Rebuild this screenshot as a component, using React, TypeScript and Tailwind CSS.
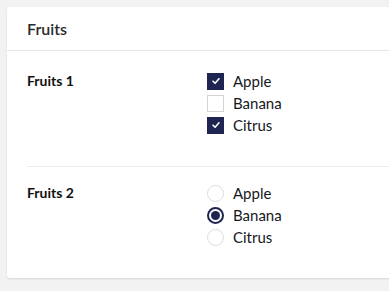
import React from 'react';

const fruits = ['Apple', 'Banana', 'Citrus'];

const CheckBox: React.FC<{ checked: boolean }> = ({ checked }) => (
  <span
    className={`flex h-[17px] w-[17px] items-center justify-center border ${
      checked ? 'border-[#1e2550] bg-[#1e2550]' : 'border-[#d4d4d4] bg-white'
    }`}
  >
    {checked && (
      <svg width="10" height="10" viewBox="0 0 10 10" fill="none">
        <path d="M2 5.2 L4.1 7.3 L8 2.8" stroke="white" strokeWidth="1.6" strokeLinecap="round" strokeLinejoin="round" />
      </svg>
    )}
  </span>
);

const Radio: React.FC<{ checked: boolean }> = ({ checked }) => (
  <span
    className={`flex h-[17px] w-[17px] items-center justify-center rounded-full border ${
      checked ? 'border-2 border-[#1e2550]' : 'border-[#dcdcdc]'
    }`}
  >
    {checked && <span className="h-[9px] w-[9px] rounded-full bg-[#1e2550]" />}
  </span>
);

const App: React.FC = () => {
  return (
    <div className="h-[291px] w-[389px] overflow-hidden bg-[#f3f2f2] pl-[7px] pt-[7px] font-['Lato',sans-serif]">
      <div className="mr-[-20px] rounded-[3px] bg-white shadow-[0_1px_2px_rgba(0,0,0,0.12)]">
        <div className="flex h-[44px] items-center border-b border-[#e6e6e6] px-5">
          <h2 className="text-[16px] font-semibold text-[#2b2b2b]">Fruits</h2>
        </div>

        <div className="ml-5 border-b border-[#ececec] pb-[30px] pt-[19px]">
          <div className="grid grid-cols-[180px_1fr]">
            <span className="text-[14px] font-bold leading-[22px] text-[#111]">Fruits 1</span>
            <div className="flex flex-col">
              {fruits.map((f, i) => (
                <label key={f} className="flex h-[22px] items-center gap-[9px] text-[15px] text-[#16181d]">
                  <CheckBox checked={i !== 1} />
                  {f}
                </label>
              ))}
            </div>
          </div>
        </div>

        <div className="ml-5 pb-[30px] pt-[15px]">
          <div className="grid grid-cols-[180px_1fr]">
            <span className="text-[14px] font-bold leading-[22px] text-[#111]">Fruits 2</span>
            <div className="flex flex-col">
              {fruits.map((f, i) => (
                <label key={f} className="flex h-[22px] items-center gap-[9px] text-[15px] text-[#16181d]">
                  <Radio checked={i === 1} />
                  {f}
                </label>
              ))}
            </div>
          </div>
        </div>
      </div>
    </div>
  );
};

export default App;
